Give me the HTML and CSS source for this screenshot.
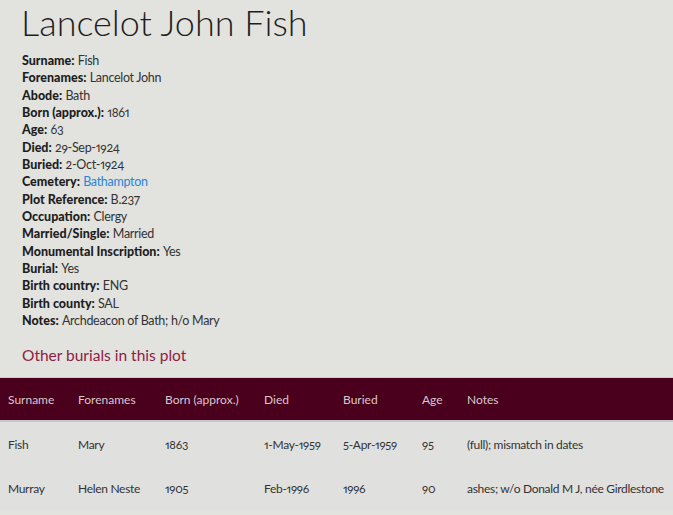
FILE: index.html
```html
<!DOCTYPE html>
<html lang="en">
<head>
<meta charset="utf-8">
<title>Lancelot John Fish</title>
<link rel="stylesheet" href="styles.css">
</head>
<body>
<main class="page">
  <h1 class="title">Lancelot John Fish</h1>
  <dl class="details">
    <div class="row"><dt>Surname:</dt> <dd>Fish</dd></div>
    <div class="row"><dt>Forenames:</dt> <dd>Lancelot John</dd></div>
    <div class="row"><dt>Abode:</dt> <dd>Bath</dd></div>
    <div class="row"><dt>Born (approx.):</dt> <dd>1861</dd></div>
    <div class="row"><dt>Age:</dt> <dd>63</dd></div>
    <div class="row"><dt>Died:</dt> <dd>29-Sep-1924</dd></div>
    <div class="row"><dt>Buried:</dt> <dd>2-Oct-1924</dd></div>
    <div class="row"><dt>Cemetery:</dt> <dd><a href="#" class="link">Bathampton</a></dd></div>
    <div class="row"><dt>Plot Reference:</dt> <dd>B.237</dd></div>
    <div class="row"><dt>Occupation:</dt> <dd>Clergy</dd></div>
    <div class="row"><dt>Married/Single:</dt> <dd>Married</dd></div>
    <div class="row"><dt>Monumental Inscription:</dt> <dd>Yes</dd></div>
    <div class="row"><dt>Burial:</dt> <dd>Yes</dd></div>
    <div class="row"><dt>Birth country:</dt> <dd>ENG</dd></div>
    <div class="row"><dt>Birth county:</dt> <dd>SAL</dd></div>
    <div class="row"><dt>Notes:</dt> <dd>Archdeacon of Bath; h/o Mary</dd></div>
  </dl>
  <h2 class="subtitle">Other burials in this plot</h2>
  <table class="burials">
    <colgroup>
      <col class="w-surname">
      <col class="w-fore">
      <col class="w-born">
      <col class="w-died">
      <col class="w-buried">
      <col class="w-age">
      <col>
    </colgroup>
    <thead>
      <tr>
        <th>Surname</th>
        <th>Forenames</th>
        <th>Born (approx.)</th>
        <th>Died</th>
        <th>Buried</th>
        <th>Age</th>
        <th>Notes</th>
      </tr>
    </thead>
    <tbody>
      <tr>
        <td>Fish</td><td>Mary</td><td>1863</td><td>1-May-1959</td><td>5-Apr-1959</td><td>95</td><td>(full); mismatch in dates</td>
      </tr>
      <tr>
        <td>Murray</td><td>Helen Neste</td><td>1905</td><td>Feb-1996</td><td>1996</td><td>90</td><td>ashes; w/o Donald M J, née Girdlestone</td>
      </tr>
    </tbody>
  </table>
</main>
</body>
</html>
```

FILE: styles.css
```css
html, body {
  margin: 0;
  padding: 0;
  background: #e2e2de;
}
body {
  font-family: "Lato", "Open Sans", sans-serif;
  font-variant-numeric: oldstyle-nums proportional-nums;
  color: #2b2b2b;
  overflow: hidden;
}
.page {
  display: flex;
  flex-direction: column;
}
.title {
  margin: 0 0 0 21px;
  font-weight: 300;
  font-size: 36px;
  line-height: 44px;
  color: #1e1e1e;
}
.details {
  margin: 8px 0 0 22px;
  font-size: 12.5px;
  line-height: 17.33px;
}
.details .row {
  display: block;
}
.details dt {
  display: inline;
  font-weight: 900;
  color: #1e1e1e;
}
.details dd {
  display: inline;
  margin: 0;
  font-size: 12.5px;
  letter-spacing: -0.3px;
  color: #333;
}
.link {
  color: #2a85d8;
  text-decoration: none;
}
.subtitle {
  margin: 14px 0 0 22px;
  font-weight: 400;
  font-size: 15.5px;
  line-height: 24px;
  color: #8e1c44;
}
.burials {
  margin-top: 10px;
  width: 100%;
  table-layout: fixed;
  border-collapse: collapse;
  font-size: 12px;
  border-top: 1px solid #cdcdca;
}
.w-surname { width: 70px; }
.w-fore { width: 87px; }
.w-born { width: 99px; }
.w-died { width: 79px; }
.w-buried { width: 79px; }
.w-age { width: 45px; }
.burials thead tr {
  background: #4a001d;
  border-bottom: 2px solid #cbc6c7;
}
.burials th {
  font-weight: 400;
  color: #d8c8cc;
  text-align: left;
  height: 42px;
  padding: 0 8px;
  white-space: nowrap;
}
.burials td {
  height: 44px;
  padding: 0 8px;
  color: #333;
  background: #e0e0df;
  white-space: nowrap;
  letter-spacing: -0.3px;
}
```
